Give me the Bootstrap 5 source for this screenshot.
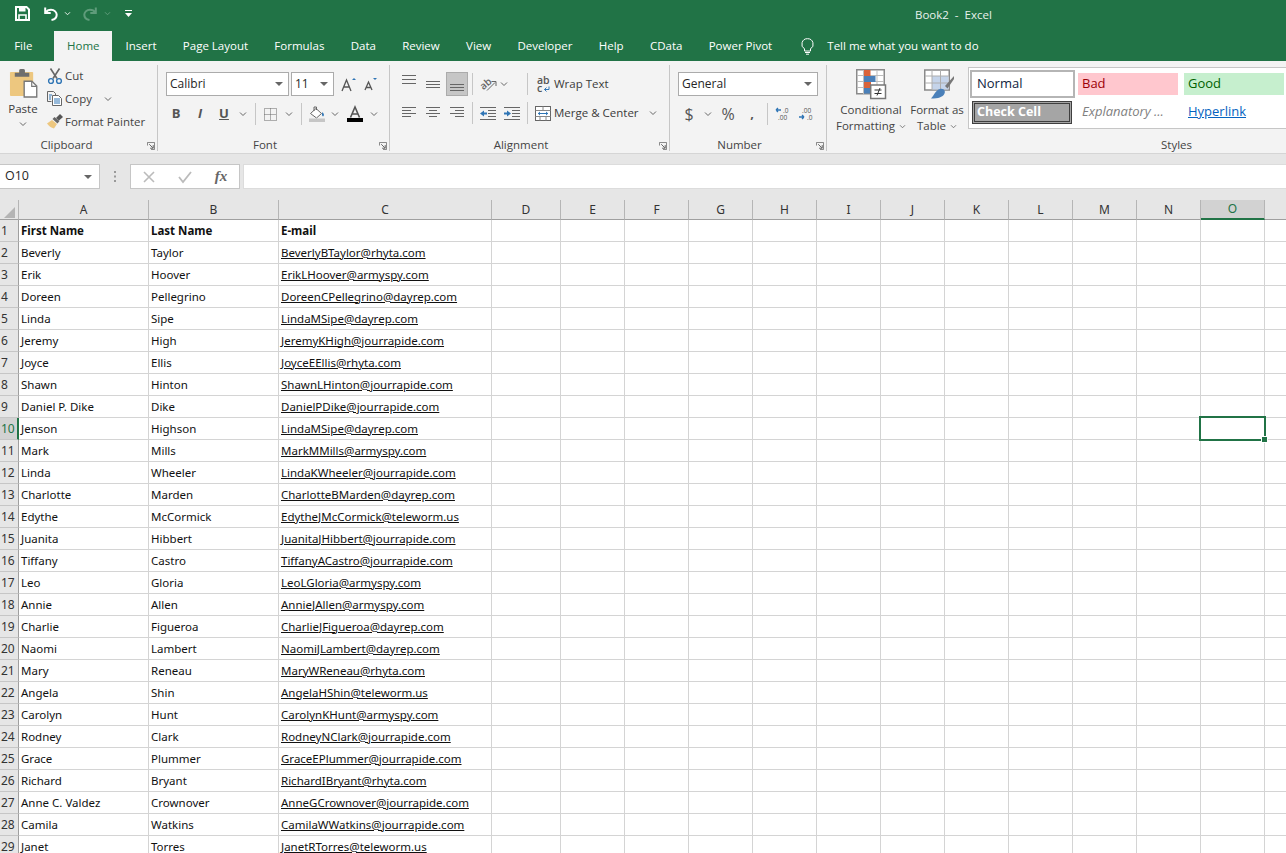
<!DOCTYPE html>
<html lang="en">
<head>
<meta charset="utf-8">
<title>Book2 - Excel</title>
<link href="https://cdn.jsdelivr.net/npm/bootstrap@5.3.0/dist/css/bootstrap.min.css" rel="stylesheet">
<style>
html,body{height:853px;overflow:hidden}
body{font-family:"Open Sans","Noto Sans",sans-serif;font-size:11.5px;color:#3b3b3b;background:#e6e6e6}
svg{display:block;flex:none;overflow:visible}
.title-bar{height:31px;background:#217346;color:#fff}
.qat{padding-left:15px;height:27px}
.g14{margin-left:14px}.g6{margin-left:6px}.g12{margin-left:12px}.g7{margin-left:7px}
.title-text{position:absolute;left:915px;top:6px;white-space:pre;color:#e8f1ec}
.tabs-bar{height:30px;background:#217346;padding-left:1px}
.xl-tab{height:30px;line-height:30px;padding:0 13.150px;color:#fff;white-space:nowrap;text-decoration:none}
.xl-tab.on{background:#f3f3f3;color:#217346;padding:0 12.500px;margin-left:9px;margin-right:.4px}
.tell{color:#fff;margin-left:16px;gap:13px;line-height:30px}
.ribbon{height:93px;background:#f3f3f3;border-bottom:1px solid #d5d5d5}
.rgroup{height:86px;margin-top:4px;position:relative;border-right:1px solid #c6c6c6;flex:none}
.rlabel{position:absolute;left:0;right:0;bottom:0;height:13px;line-height:13px;text-align:center;color:#444;padding-right:17px}
.launch{position:absolute;right:2px;bottom:1px}
.g-clip{width:158px;padding:3px 0 0 6px}
.g-font{width:232px;padding:7px 0 0 8px}
.g-align{width:280px;padding:2px 0 0 7px}
.g-num{width:157px;padding:7px 0 0 8px}
.g-style{flex:1;border-right:0;padding-left:11px}
.g-style .rlabel{left:238px;padding-right:0}
.g-clip .rlabel{padding-right:24px}
.paste{width:34px;text-align:center;margin-right:7px;line-height:16px}
.paste>svg{margin:1px auto 3px}
.clipcol{margin-top:-4px}
.cliprow{height:23px;gap:2px;align-items:center;color:#444}
.xbox{height:24px;border:1px solid #ababab;background:#fff;align-items:center;padding:0 3px;color:#262626;justify-content:space-between;font-size:12px}
.w-fn{width:123px}.w-sz{width:43px;margin-left:2px}.w-gen{width:140px}
.caret{width:0;height:0;border:4px solid transparent;border-top-color:#666;border-bottom:0;margin-right:2px}
.ibtn{height:24px;width:24px;display:flex;align-items:center;justify-content:center;flex:none;color:#555;font-size:13px}
.nar{width:14px}
.w20{width:20px}.w18{width:18px}
.vsep{width:1px;height:22px;background:#c6c6c6;flex:none}
.fnt .vsep{margin:0 5px}
.row2{margin-top:6px}
.fnt{margin-left:-2px}
.on-btn{background:#c6c6c6;border:1px solid #ababab;width:22px;margin:0 1px}
.alignrow{height:24px;align-items:center;margin-top:5px;white-space:nowrap}
.g3{margin-left:3px}.g1{margin-left:1px}.g2{margin-left:2px}.g9{margin-left:9px}.g10{margin-left:10px}.g16{margin-left:16px}.g4{margin-left:4px}.gm1{margin-left:-1px}
.big{width:66px;text-align:center;line-height:16px;color:#444;padding-top:4px;white-space:nowrap}
.big>svg{margin:0 auto 3px}
.big>svg.fat-ic{margin-left:20px}
.gallery{width:320px;height:62px;background:#fff;border:1px solid #c6c6c6;border-right:0;margin-top:2px;margin-left:-2px;padding:2px 0 0 1px;display:grid;grid-template-columns:108px 106px 100px;grid-template-rows:29px 26px;gap:1px 0}
.st{font-size:13px;padding-left:4px;line-height:20px;height:22px;white-space:nowrap}
.st-n{width:105px;height:28px;border:2px solid #b5b5b5;line-height:23px;padding-left:5px;color:#10243e}
.st-b{width:100px;background:#ffc7ce;color:#9c0006;margin-top:3px}
.st-g{width:100px;background:#c6efce;color:#006100;margin-top:3px}
.st-c{width:100px;height:23px;background:#a5a5a5;color:#fff;font-weight:700;font-size:12.500px;border:3px double #3f3f3f;line-height:15px;padding-left:2px;margin:1px 0 0 2px}
.st-e{color:#7f7f7f;font-style:italic;margin-top:1px}
.st-h{color:#0563c1;text-decoration:underline;margin-top:1px}
.strip{height:10px;background:#e6e6e6}
.fbar{height:26px;background:#e6e6e6}
.namebox{width:100px;height:25px;background:#fff;border:1px solid #c6c6c6;border-left:0;padding:0 5px;align-items:center;justify-content:space-between;font-size:12.500px;color:#262626}
.dots{width:30px;justify-content:center;align-items:center;display:flex;height:25px}
.fnbox{width:110px;height:25px;background:#fff;border:1px solid #c6c6c6;align-items:center}
.fcell{width:36px;display:flex;align-items:center;justify-content:center}
.fx-label{font-family:"Liberation Serif",serif;font-size:15px;color:#666;font-weight:700}
.finput{flex:1;height:25px;margin-left:3px;background:#fff;border:1px solid #dcdcdc;border-right:0}
.gap10{height:10px;background:#e6e6e6}
.sheet-wrap{height:653px;overflow:hidden;background:#fff}
.sheet{table-layout:fixed;border-collapse:separate;border-spacing:0;width:1329px;font-family:"Noto Sans","Open Sans",sans-serif;font-size:11.500px;color:#111}
.sheet td{height:22px;padding:0 2px;border-right:1px solid #d4d4d4;border-bottom:1px solid #d4d4d4;white-space:nowrap;overflow:visible;line-height:20px;vertical-align:middle}
.sheet tbody th{height:22px;background:#e6e6e6;border-right:1px solid #9f9f9f;border-bottom:1px solid #c6c6c6;text-align:left;font-weight:400;padding:0 0 0 1px;color:#333;font-size:12px}
.sheet thead th{height:20px;background:#e6e6e6;border-right:1px solid #b5b5b5;border-bottom:1px solid #9f9f9f;text-align:center;font-weight:400;padding:0;color:#333;font-size:12px;line-height:18px}
.sheet thead th.corner{position:relative}
.tri{position:absolute;left:4px;bottom:1px;width:0;height:0;border-style:solid;border-width:0 0 11px 11px;border-color:transparent transparent #b4b4b4 transparent}
.sheet thead th.col-on{background:#d2d2d2;border-bottom:2px solid #217346;color:#217346}
.sheet tbody th.row-on{background:#d2d2d2;border-right:2px solid #217346;color:#217346}
.bd{font-weight:700}
.lnk{text-decoration:underline}
.cellpos{position:relative}
.sel{position:absolute;left:-2px;top:-2px;width:67px;height:25px;border:2px solid #217346;pointer-events:none}
.hnd{position:absolute;right:-4px;bottom:-4px;width:5px;height:5px;background:#217346;border:1px solid #fff;box-sizing:content-box}
</style>
</head>
<body>
<svg width="0" height="0" class="position-absolute">
<defs>
<symbol id="chev" viewBox="0 0 8 6"><path d="M1 1.500l3 3 3-3" fill="none" stroke="#666" stroke-width="1"/></symbol>
<symbol id="launch" viewBox="0 0 9 9"><path d="M.5 4V.5H8.500V8.500H4.500" fill="none" stroke="#777"/><path d="M2.500 2.500l4 4M7 3.500V7H3.500" fill="none" stroke="#555"/></symbol>
</defs>
</svg>

<div class="title-bar position-relative">
  <div class="qat d-flex align-items-center">
    <svg width="15" height="15" viewBox="0 0 15 15"><path d="M1 1H11.500L14 3.500V14H1Z" fill="none" stroke="#fff" stroke-width="2"/><path d="M4 1v4.500h6.500V1" fill="#fff"/><path d="M4 14V9h7v5" fill="none" stroke="#fff" stroke-width="1.600"/></svg>
    <svg class="g14" width="14" height="14" viewBox="0 0 14 14"><path d="M1.200 .5v5.500h5.500" fill="none" stroke="#fff" stroke-width="2"/><path d="M1.800 5.500C3 3.500 5 2.800 7 2.800c3.500 0 5.700 2.500 5.700 5S11 12.500 7.500 13" fill="none" stroke="#fff" stroke-width="2"/></svg>
    <svg class="g6" width="7" height="5" viewBox="0 0 8 6"><path d="M1 1.500l3 3 3-3" fill="none" stroke="#e6efe9" stroke-width="1.200"/></svg>
    <svg class="g12" width="14" height="14" viewBox="0 0 14 14"><path d="M12.800 .5v5.500H7.300" fill="none" stroke="#5f9c7b" stroke-width="2"/><path d="M12.200 5.500C11 3.500 9 2.800 7 2.800c-3.500 0-5.700 2.500-5.700 5S3 12.500 6.500 13" fill="none" stroke="#5f9c7b" stroke-width="2"/></svg>
    <svg class="g7" width="7" height="5" viewBox="0 0 8 6"><path d="M1 1.500l3 3 3-3" fill="none" stroke="#5f9c7b" stroke-width="1.200"/></svg>
    <svg class="g14" width="7" height="7" viewBox="0 0 7 7"><path d="M0 .5h7" stroke="#fff"/><path d="M0 3h7L3.500 7Z" fill="#fff"/></svg>
  </div>
  <span class="title-text">Book2  -  Excel</span>
</div>

<nav class="tabs-bar d-flex">
  <a class="xl-tab" href="#">File</a>
  <a class="xl-tab on" href="#">Home</a>
  <a class="xl-tab" href="#">Insert</a>
  <a class="xl-tab" href="#">Page Layout</a>
  <a class="xl-tab" href="#">Formulas</a>
  <a class="xl-tab" href="#">Data</a>
  <a class="xl-tab" href="#">Review</a>
  <a class="xl-tab" href="#">View</a>
  <a class="xl-tab" href="#">Developer</a>
  <a class="xl-tab" href="#">Help</a>
  <a class="xl-tab" href="#">CData</a>
  <a class="xl-tab" href="#">Power Pivot</a>
  <div class="tell d-flex align-items-center">
    <svg width="13" height="17" viewBox="0 0 13 17"><path d="M6.500.7a5.500 5.500 0 0 0-3 10.200V13h6v-2.100a5.500 5.500 0 0 0-3-10.200Z" fill="none" stroke="#fff"/><path d="M4 14.500h5M5 16.200h3" stroke="#fff"/></svg>
    <span>Tell me what you want to do</span>
  </div>
</nav>

<section class="ribbon d-flex">
  <div class="rgroup g-clip d-flex">
    <div class="paste">
      <svg width="29" height="29" viewBox="0 0 30 30"><rect x="1" y="3" width="24" height="25" rx="1" fill="#edc77f"/><path d="M6 8V4h4.500V1.500C10.500.5 11.500 0 13.500 0s3 .5 3 1.500V4H21v4Z" fill="#6e6e6e"/><path d="M15.700 12.700h8l5 5v11.300h-13Z" fill="#fff" stroke="#777" stroke-width="1.400"/><path d="M23.500 12.700v5.300h5.200" fill="none" stroke="#777" stroke-width="1.200"/></svg>
      <div>Paste</div>
      <svg width="8" height="6" class="mt-1"><use href="#chev"/></svg>
    </div>
    <div class="clipcol">
      <div class="cliprow d-flex">
        <svg width="16" height="16" viewBox="0 0 16 16"><path d="M3.500 .5l6.500 10M12.500 .5L6 10.500" stroke="#666" stroke-width="1.600"/><circle cx="4" cy="13" r="2.400" fill="none" stroke="#2f75b5" stroke-width="1.400"/><circle cx="12" cy="13" r="2.400" fill="none" stroke="#2f75b5" stroke-width="1.400"/></svg>
        <span>Cut</span>
      </div>
      <div class="cliprow d-flex">
        <svg width="16" height="15" viewBox="0 0 16 15"><path d="M.5.5h6l2 2v3M.5.5v10h4" fill="none" stroke="#666"/><path d="M5.500 4.500h6l3 3v7h-9Z" fill="#fff" stroke="#666"/><path d="M2 4h3M2 6h2M2 8h2" stroke="#2f75b5"/><path d="M7 8h6M7 10h6M7 12h6" stroke="#2f75b5"/></svg>
        <span>Copy</span>
        <svg width="8" height="6" class="g10"><use href="#chev"/></svg>
      </div>
      <div class="cliprow d-flex">
        <svg width="16" height="15" viewBox="0 0 16 15"><path d="M0 9.500l5-3.500 5 4-3 4.500C4 14 2 12 0 9.500Z" fill="#edc77f"/><path d="M5.500 5l5 4.500 2-2.500-5-4Z" fill="#666"/><path d="M9 4l4-4 3 3-4 3.500Z" fill="#555"/></svg>
        <span>Format Painter</span>
      </div>
    </div>
    <div class="rlabel">Clipboard</div>
    <svg class="launch" width="8" height="8"><use href="#launch"/></svg>
  </div>

  <div class="rgroup g-font">
    <div class="d-flex align-items-center">
      <div class="xbox d-flex w-fn"><span>Calibri</span><i class="caret"></i></div>
      <div class="xbox d-flex w-sz"><span>11</span><i class="caret"></i></div>
      <div class="ibtn g2"><svg width="15" height="15" viewBox="0 0 15 15"><path d="M1 14L5.500 3 10 14M2.800 10h5.400" fill="none" stroke="#555" stroke-width="1.300"/><path d="M11 3l2-2 2 2Z" fill="#2f75b5"/></svg></div>
      <div class="ibtn gm1"><svg width="14" height="14" viewBox="0 0 14 14"><path d="M1 13L4.500 5 8 13M2.300 10.500h4.400" fill="none" stroke="#555" stroke-width="1.300"/><path d="M9 1h4l-2 2Z" fill="#2f75b5"/></svg></div>
    </div>
    <div class="d-flex align-items-center row2 fnt">
      <div class="ibtn fw-bold">B</div>
      <div class="ibtn fst-italic fw-bold">I</div>
      <div class="ibtn fw-bold text-decoration-underline">U</div>
      <div class="ibtn nar"><svg width="8" height="6"><use href="#chev"/></svg></div>
      <div class="vsep"></div>
      <div class="ibtn w18"><svg width="13" height="13" viewBox="0 0 13 13"><path d="M.5.500h12v12H.500ZM6.500.500v12M.500 6.500h12" fill="none" stroke="#666" stroke-dasharray="1 1"/></svg></div>
      <div class="ibtn nar g3"><svg width="8" height="6"><use href="#chev"/></svg></div>
      <div class="vsep"></div>
      <div class="ibtn w20"><svg width="16" height="16" viewBox="0 0 16 16"><path d="M1.500 7.500L7 2.500l5.500 5-5 4.500Z" fill="#fff" stroke="#666"/><path d="M5 5V1h2.500v3" fill="none" stroke="#666"/><path d="M13.500 6c1.800 2 1.800 3.800 .5 4.500-1.300-.7-1.300-2.500-.5-4.500Z" fill="#2f75b5"/><rect y="12.500" width="16" height="3.500" fill="#c6c6c6"/></svg></div>
      <div class="ibtn nar g1"><svg width="8" height="6"><use href="#chev"/></svg></div>
      <div class="ibtn w20 g3"><svg width="16" height="16" viewBox="0 0 16 16"><path d="M3.500 11.500L8 1l4.500 10.500M5 8h6" fill="none" stroke="#555" stroke-width="1.600"/><rect y="12" width="16" height="4" fill="#000"/></svg></div>
      <div class="ibtn nar g2"><svg width="8" height="6"><use href="#chev"/></svg></div>
    </div>
    <div class="rlabel">Font</div>
    <svg class="launch" width="8" height="8"><use href="#launch"/></svg>
  </div>

  <div class="rgroup g-align">
    <div class="d-flex alignrow">
      <div class="ibtn"><svg width="14" height="20" viewBox="0 0 14 20"><path d="M0 1.500h14M0 5.500h14M0 9.500h14" stroke="#666"/></svg></div>
      <div class="ibtn"><svg width="14" height="9" viewBox="0 0 14 9"><path d="M0 1.500h14M0 4.500h14M0 7.500h14" stroke="#666"/></svg></div>
      <div class="ibtn on-btn"><svg width="14" height="20" viewBox="0 0 14 20"><path d="M0 10.500h14M0 13.500h14M0 16.500h14" stroke="#666"/></svg></div>
      <div class="vsep g3"></div>
      <svg class="g7" width="17" height="16" viewBox="0 0 17 16"><text x="0" y="11" font-size="10" font-weight="600" fill="#666" font-family="Open Sans" transform="rotate(-40 6 8)">ab</text><path d="M7 14.500l8-8M11.500 5.500h4.500v4.500" fill="none" stroke="#666"/></svg>
      <div class="ibtn nar"><svg width="8" height="6"><use href="#chev"/></svg></div>
      <div class="vsep g16"></div>
      <svg class="g9" width="13" height="17" viewBox="0 0 13 17"><text x="0" y="7.500" font-size="10.500" font-weight="600" fill="#555" font-family="Open Sans">ab</text><text x="0" y="16" font-size="10.500" font-weight="600" fill="#555" font-family="Open Sans">c</text><path d="M12 10.500v3H7.500M9.500 11.500l-2 2 2 2" fill="none" stroke="#2f75b5"/></svg>
      <span class="g4">Wrap Text</span>
    </div>
    <div class="d-flex alignrow">
      <div class="ibtn"><svg width="14" height="12" viewBox="0 0 14 12"><path d="M0 .5h14M0 3.500h9M0 6.500h14M0 9.500h9" stroke="#666"/></svg></div>
      <div class="ibtn"><svg width="14" height="12" viewBox="0 0 14 12"><path d="M0 .5h14M3 3.500h8M0 6.500h14M3 9.500h8" stroke="#666"/></svg></div>
      <div class="ibtn"><svg width="14" height="12" viewBox="0 0 14 12"><path d="M0 .5h14M5 3.500h9M0 6.500h14M5 9.500h9" stroke="#666"/></svg></div>
      <div class="vsep g3"></div>
      <div class="ibtn g3"><svg width="16" height="13" viewBox="0 0 16 13"><path d="M0 .5h16M8 3.500h8M8 6.500h8M8 9.500h8M0 12.500h16" stroke="#666" fill="none"/><path d="M0 6.500l4-3v2h3v2H4v2Z" fill="#2f75b5"/></svg></div>
      <div class="ibtn"><svg width="16" height="13" viewBox="0 0 16 13"><path d="M0 .5h16M8 3.500h8M8 6.500h8M8 9.500h8M0 12.500h16" stroke="#666" fill="none"/><path d="M7 6.500l-4-3v2H0v2h3v2Z" fill="#2f75b5"/></svg></div>
      <div class="vsep g3"></div>
      <svg class="g7" width="16" height="15" viewBox="0 0 16 15"><rect x=".5" y=".5" width="15" height="14" fill="#fff" stroke="#666"/><path d="M.5 4.500h15M.5 10.500h15M8 .5v4M5 10.500v4M11 10.500v4" stroke="#888"/><path d="M3 7.500h10" stroke="#2f75b5"/><path d="M3 7.500l2-2v4ZM13 7.500l-2-2v4Z" fill="#2f75b5"/></svg>
      <span class="g3">Merge &amp; Center</span>
      <svg width="8" height="6" class="g10"><use href="#chev"/></svg>
    </div>
    <div class="rlabel">Alignment</div>
    <svg class="launch" width="8" height="8"><use href="#launch"/></svg>
  </div>

  <div class="rgroup g-num">
    <div class="xbox d-flex w-gen"><span>General</span><i class="caret"></i></div>
    <div class="d-flex align-items-center row2">
      <div class="ibtn gm1 fs-6">$</div>
      <div class="ibtn nar"><svg width="8" height="6"><use href="#chev"/></svg></div>
      <div class="ibtn fs-6 g1">%</div>
      <div class="ibtn fw-bold">,</div>
      <div class="vsep g3"></div>
      <div class="ibtn g2"><svg width="15" height="14" viewBox="0 0 15 14"><path d="M1 3h5M1 3l2-2M1 3l2 2" fill="none" stroke="#2f75b5" stroke-width="1.300"/><text x="8" y="5.500" font-size="6.500" fill="#555" font-family="Open Sans">.0</text><text x="3" y="13" font-size="6.500" fill="#555" font-family="Open Sans">.00</text></svg></div>
      <div class="ibtn"><svg width="15" height="14" viewBox="0 0 15 14"><text x="3" y="5.500" font-size="6.500" fill="#555" font-family="Open Sans">.00</text><path d="M0 10h5M5 10l-2-2M5 10l-2 2" fill="none" stroke="#2f75b5" stroke-width="1.300"/><text x="8" y="13" font-size="6.500" fill="#555" font-family="Open Sans">.0</text></svg></div>
    </div>
    <div class="rlabel">Number</div>
    <svg class="launch" width="8" height="8"><use href="#launch"/></svg>
  </div>

  <div class="rgroup g-style d-flex">
    <div class="big">
      <svg width="30" height="30" viewBox="0 0 30 30"><rect x=".75" y=".75" width="27.500" height="24" fill="#fff" stroke="#8a8a8a" stroke-width="1.500"/><path d="M7.500 1v24M21 1v24M1 6.500h27M1 12.500h27M1 18.500h27" stroke="#bdbdbd"/><path d="M8 1h6.500v6H8ZM8 13h7v6H8Z" fill="#d9633a"/><path d="M8 7h11.500v6H8ZM8 19h6v5.500H8Z" fill="#4a80b9"/><rect x="14.700" y="16" width="14.800" height="13.500" fill="#fff" stroke="#777" stroke-width="1.500"/><path d="M18.500 21h7M18.500 24.500h7M24 19l-3 7.500" stroke="#333" fill="none"/></svg>
      <div>Conditional</div>
      <div class="d-flex justify-content-center align-items-center gap-1">Formatting<svg width="7" height="5"><use href="#chev"/></svg></div>
    </div>
    <div class="big">
      <svg class="fat-ic" width="30" height="30" viewBox="0 0 30 30"><rect x=".75" y="1" width="24.500" height="20" fill="#fff" stroke="#8a8a8a" stroke-width="1.500"/><rect x="8" y="7" width="16.500" height="13.500" fill="#c5d4ea"/><path d="M8 1v20M16.500 1v20M1 7h24M1 14h24" stroke="#aeaeae"/><path d="M30 7l-9 10 2.500 2.500L30 10Z" fill="#777"/><path d="M7 29.500c3-3 4.500-8.500 9-9.500s6 3 4 5.500-5 4-13 4Z" fill="#4a80b9"/></svg>
      <div>Format as</div>
      <div class="d-flex justify-content-center align-items-center gap-1">Table<svg width="7" height="5"><use href="#chev"/></svg></div>
    </div>
    <div class="gallery">
      <div class="st st-n">Normal</div>
      <div class="st st-b">Bad</div>
      <div class="st st-g">Good</div>
      <div class="st st-c">Check Cell</div>
      <div class="st st-e">Explanatory ...</div>
      <div class="st st-h">Hyperlink</div>
    </div>
    <div class="rlabel">Styles</div>
  </div>
</section>

<div class="strip"></div>
<div class="fbar d-flex">
  <div class="namebox d-flex"><span>O10</span><i class="caret"></i></div>
  <div class="dots"><svg width="3" height="11" viewBox="0 0 3 11"><path d="M0 0h2v2H0ZM0 4.500h2v2H0ZM0 9h2v2H0Z" fill="#999"/></svg></div>
  <div class="fnbox d-flex">
    <div class="fcell"><svg width="12" height="12" viewBox="0 0 12 12"><path d="M1 1l10 10M11 1L1 11" stroke="#bbb" stroke-width="1.600"/></svg></div>
    <div class="fcell"><svg width="14" height="12" viewBox="0 0 14 12"><path d="M1 6l4 5 8-10" fill="none" stroke="#bbb" stroke-width="1.800"/></svg></div>
    <div class="fcell"><em class="fx-label">fx</em></div>
  </div>
  <div class="finput"></div>
</div>
<div class="gap10"></div>

<div class="sheet-wrap">
<table class="sheet">
<colgroup><col style="width:19px"><col style="width:130px"><col style="width:130px"><col style="width:213px"><col style="width:69px"><col style="width:64px"><col style="width:64px"><col style="width:64px"><col style="width:64px"><col style="width:64px"><col style="width:64px"><col style="width:64px"><col style="width:64px"><col style="width:64px"><col style="width:64px"><col style="width:64px"><col style="width:64px"></colgroup>
<thead><tr><th class="corner"><span class="tri"></span></th><th>A</th><th>B</th><th>C</th><th>D</th><th>E</th><th>F</th><th>G</th><th>H</th><th>I</th><th>J</th><th>K</th><th>L</th><th>M</th><th>N</th><th class="col-on">O</th><th></th></tr></thead>
<tbody>
<tr><th>1</th><td class="bd">First Name</td><td class="bd">Last Name</td><td class="bd">E-mail</td><td></td><td></td><td></td><td></td><td></td><td></td><td></td><td></td><td></td><td></td><td></td><td></td><td></td></tr>
<tr><th>2</th><td>Beverly</td><td>Taylor</td><td class="lnk">BeverlyBTaylor@rhyta.com</td><td></td><td></td><td></td><td></td><td></td><td></td><td></td><td></td><td></td><td></td><td></td><td></td><td></td></tr>
<tr><th>3</th><td>Erik</td><td>Hoover</td><td class="lnk">ErikLHoover@armyspy.com</td><td></td><td></td><td></td><td></td><td></td><td></td><td></td><td></td><td></td><td></td><td></td><td></td><td></td></tr>
<tr><th>4</th><td>Doreen</td><td>Pellegrino</td><td class="lnk">DoreenCPellegrino@dayrep.com</td><td></td><td></td><td></td><td></td><td></td><td></td><td></td><td></td><td></td><td></td><td></td><td></td><td></td></tr>
<tr><th>5</th><td>Linda</td><td>Sipe</td><td class="lnk">LindaMSipe@dayrep.com</td><td></td><td></td><td></td><td></td><td></td><td></td><td></td><td></td><td></td><td></td><td></td><td></td><td></td></tr>
<tr><th>6</th><td>Jeremy</td><td>High</td><td class="lnk">JeremyKHigh@jourrapide.com</td><td></td><td></td><td></td><td></td><td></td><td></td><td></td><td></td><td></td><td></td><td></td><td></td><td></td></tr>
<tr><th>7</th><td>Joyce</td><td>Ellis</td><td class="lnk">JoyceEEllis@rhyta.com</td><td></td><td></td><td></td><td></td><td></td><td></td><td></td><td></td><td></td><td></td><td></td><td></td><td></td></tr>
<tr><th>8</th><td>Shawn</td><td>Hinton</td><td class="lnk">ShawnLHinton@jourrapide.com</td><td></td><td></td><td></td><td></td><td></td><td></td><td></td><td></td><td></td><td></td><td></td><td></td><td></td></tr>
<tr><th>9</th><td>Daniel P. Dike</td><td>Dike</td><td class="lnk">DanielPDike@jourrapide.com</td><td></td><td></td><td></td><td></td><td></td><td></td><td></td><td></td><td></td><td></td><td></td><td></td><td></td></tr>
<tr><th class="row-on">10</th><td>Jenson</td><td>Highson</td><td class="lnk">LindaMSipe@dayrep.com</td><td></td><td></td><td></td><td></td><td></td><td></td><td></td><td></td><td></td><td></td><td></td><td class="cellpos"><div class="sel"><span class="hnd"></span></div></td><td></td></tr>
<tr><th>11</th><td>Mark</td><td>Mills</td><td class="lnk">MarkMMills@armyspy.com</td><td></td><td></td><td></td><td></td><td></td><td></td><td></td><td></td><td></td><td></td><td></td><td></td><td></td></tr>
<tr><th>12</th><td>Linda</td><td>Wheeler</td><td class="lnk">LindaKWheeler@jourrapide.com</td><td></td><td></td><td></td><td></td><td></td><td></td><td></td><td></td><td></td><td></td><td></td><td></td><td></td></tr>
<tr><th>13</th><td>Charlotte</td><td>Marden</td><td class="lnk">CharlotteBMarden@dayrep.com</td><td></td><td></td><td></td><td></td><td></td><td></td><td></td><td></td><td></td><td></td><td></td><td></td><td></td></tr>
<tr><th>14</th><td>Edythe</td><td>McCormick</td><td class="lnk">EdytheJMcCormick@teleworm.us</td><td></td><td></td><td></td><td></td><td></td><td></td><td></td><td></td><td></td><td></td><td></td><td></td><td></td></tr>
<tr><th>15</th><td>Juanita</td><td>Hibbert</td><td class="lnk">JuanitaJHibbert@jourrapide.com</td><td></td><td></td><td></td><td></td><td></td><td></td><td></td><td></td><td></td><td></td><td></td><td></td><td></td></tr>
<tr><th>16</th><td>Tiffany</td><td>Castro</td><td class="lnk">TiffanyACastro@jourrapide.com</td><td></td><td></td><td></td><td></td><td></td><td></td><td></td><td></td><td></td><td></td><td></td><td></td><td></td></tr>
<tr><th>17</th><td>Leo</td><td>Gloria</td><td class="lnk">LeoLGloria@armyspy.com</td><td></td><td></td><td></td><td></td><td></td><td></td><td></td><td></td><td></td><td></td><td></td><td></td><td></td></tr>
<tr><th>18</th><td>Annie</td><td>Allen</td><td class="lnk">AnnieJAllen@armyspy.com</td><td></td><td></td><td></td><td></td><td></td><td></td><td></td><td></td><td></td><td></td><td></td><td></td><td></td></tr>
<tr><th>19</th><td>Charlie</td><td>Figueroa</td><td class="lnk">CharlieJFigueroa@dayrep.com</td><td></td><td></td><td></td><td></td><td></td><td></td><td></td><td></td><td></td><td></td><td></td><td></td><td></td></tr>
<tr><th>20</th><td>Naomi</td><td>Lambert</td><td class="lnk">NaomiJLambert@dayrep.com</td><td></td><td></td><td></td><td></td><td></td><td></td><td></td><td></td><td></td><td></td><td></td><td></td><td></td></tr>
<tr><th>21</th><td>Mary</td><td>Reneau</td><td class="lnk">MaryWReneau@rhyta.com</td><td></td><td></td><td></td><td></td><td></td><td></td><td></td><td></td><td></td><td></td><td></td><td></td><td></td></tr>
<tr><th>22</th><td>Angela</td><td>Shin</td><td class="lnk">AngelaHShin@teleworm.us</td><td></td><td></td><td></td><td></td><td></td><td></td><td></td><td></td><td></td><td></td><td></td><td></td><td></td></tr>
<tr><th>23</th><td>Carolyn</td><td>Hunt</td><td class="lnk">CarolynKHunt@armyspy.com</td><td></td><td></td><td></td><td></td><td></td><td></td><td></td><td></td><td></td><td></td><td></td><td></td><td></td></tr>
<tr><th>24</th><td>Rodney</td><td>Clark</td><td class="lnk">RodneyNClark@jourrapide.com</td><td></td><td></td><td></td><td></td><td></td><td></td><td></td><td></td><td></td><td></td><td></td><td></td><td></td></tr>
<tr><th>25</th><td>Grace</td><td>Plummer</td><td class="lnk">GraceEPlummer@jourrapide.com</td><td></td><td></td><td></td><td></td><td></td><td></td><td></td><td></td><td></td><td></td><td></td><td></td><td></td></tr>
<tr><th>26</th><td>Richard</td><td>Bryant</td><td class="lnk">RichardIBryant@rhyta.com</td><td></td><td></td><td></td><td></td><td></td><td></td><td></td><td></td><td></td><td></td><td></td><td></td><td></td></tr>
<tr><th>27</th><td>Anne C. Valdez</td><td>Crownover</td><td class="lnk">AnneGCrownover@jourrapide.com</td><td></td><td></td><td></td><td></td><td></td><td></td><td></td><td></td><td></td><td></td><td></td><td></td><td></td></tr>
<tr><th>28</th><td>Camila</td><td>Watkins</td><td class="lnk">CamilaWWatkins@jourrapide.com</td><td></td><td></td><td></td><td></td><td></td><td></td><td></td><td></td><td></td><td></td><td></td><td></td><td></td></tr>
<tr><th>29</th><td>Janet</td><td>Torres</td><td class="lnk">JanetRTorres@teleworm.us</td><td></td><td></td><td></td><td></td><td></td><td></td><td></td><td></td><td></td><td></td><td></td><td></td><td></td></tr>
</tbody>
</table>
</div>
<script src="https://cdn.jsdelivr.net/npm/bootstrap@5.3.0/dist/js/bootstrap.bundle.min.js"></script>
</body>
</html>
